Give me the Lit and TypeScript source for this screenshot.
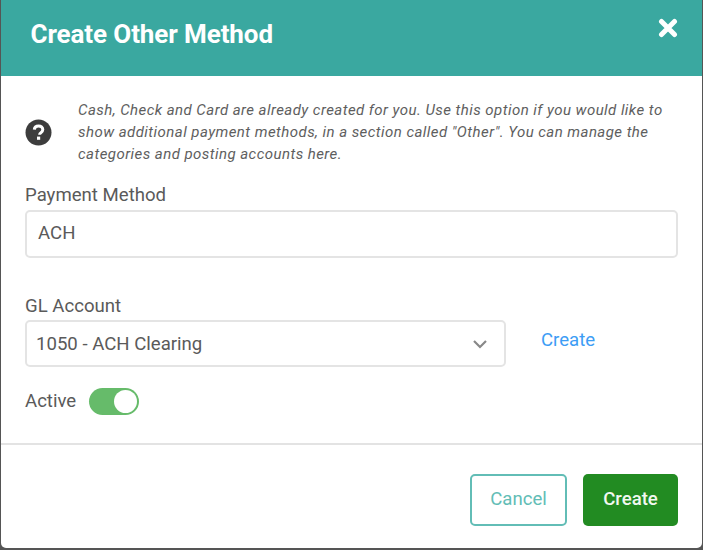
import { LitElement, html, css } from "lit";
import { customElement } from "lit/decorators.js";

@customElement("app-root")
export class AppRoot extends LitElement {
  static styles = css`
    :host { display: block; width: 703px; height: 550px; background: #555; font-family: Roboto, "Liberation Sans", sans-serif; overflow: hidden; }
    .modal { box-sizing: border-box; width: 701px; height: 548px; margin-left: 1px; background: #fff; border-radius: 0 0 5px 5px; display: flex; flex-direction: column; overflow: hidden; }
    .head { height: 76px; flex: none; background: #3aa8a0; display: flex; align-items: flex-start; justify-content: space-between; box-sizing: border-box; padding: 17px 24px 0 29.500px; }
    .title { color: #fff; font-size: 26px; font-weight: 700; line-height: 34px; letter-spacing: -0.1px; }
    .close { width: 20px; height: 20px; margin-top: 1px; display: block; }
    .body { flex: none; box-sizing: border-box; height: 369px; padding: 22px 24px 0 24px; border-bottom: 2px solid #e3e3e3; }
    .info { display: flex; align-items: center; height: 68px; }
    .info svg { width: 27px; height: 27px; flex: none; margin-right: 26px; }
    .info p { margin: 0; font-size: 15px; line-height: 22px; font-style: italic; color: #5e5e5e; width: 600px; letter-spacing: 0.45px; }
    .lab { display: block; color: #5a5a5a; font-size: 18.6px; line-height: 24px; }
    .lab.pm { margin-top: 17px; height: 27px; }
    .field { box-sizing: border-box; border: 2px solid #e4e4e4; border-radius: 5px; height: 48px; width: 653px; display: flex; align-items: center; padding: 0 9px; color: #5a5a5a; font-size: 18.6px; }
    .field.plain { padding: 0 11px 2px; }
    .lab.gl { margin-top: 36px; height: 26px; }
    .row { display: flex; align-items: flex-start; }
    .sel { width: 481px; height: 47px; justify-content: space-between; padding-right: 15px; }
    .sel svg { width: 18px; height: 12px; }
    .link { color: #3d9df5; font-size: 18.6px; margin-left: 35px; margin-top: 8px; line-height: 24px; }
    .active { display: flex; align-items: center; gap: 13px; margin-top: 20px; color: #5a5a5a; font-size: 18.6px; height: 28px; }
    .toggle { width: 50px; height: 27px; border-radius: 14px; background: #66bb6a; position: relative; }
    .knob { position: absolute; right: 2px; top: 2px; width: 23px; height: 23px; border-radius: 50%; background: #fff; }
    .foot { display: flex; justify-content: flex-end; gap: 16px; padding: 29px 24px 0 0; }
    .btn { box-sizing: border-box; height: 52px; padding-bottom: 2px; border-radius: 5px; display: flex; align-items: center; justify-content: center; font-size: 18.6px; font-weight: 500; }
    .cancel { width: 97px; border: 2px solid #62bdb6; color: #62bdb6; font-weight: 400; }
    .create { width: 95px; background: #228b22; color: #f1f8f1; }
  `;

  render() {
    return html`<div class="modal">
      <div class="head">
        <div class="title">Create Other Method</div>
        <svg class="close" viewBox="0 0 20 20"><path d="M3.5 3.5 16.5 16.5M16.5 3.5 3.5 16.5" stroke="#fff" stroke-width="5" stroke-linecap="round"/></svg>
      </div>
      <div class="body">
        <div class="info">
          <svg viewBox="0 0 27 27"><circle cx="13.5" cy="13.5" r="13" fill="#3d3d3d"/><path d="M9.3 10.6c.2-2.400 2-3.600 4.300-3.600 2.400 0 4.200 1.400 4.200 3.600 0 2.900-3.200 3-3.200 5.100" fill="none" stroke="#fff" stroke-width="3"/><rect x="12" y="17.600" width="3.200" height="3.200" fill="#fff"/></svg>
          <p>Cash, Check and Card are already created for you. Use this option if you would like to show additional payment methods, in a section called "Other". You can manage the categories and posting accounts here.</p>
        </div>
        <div class="lab pm">Payment Method</div>
        <div class="field plain">ACH</div>
        <div class="lab gl">GL Account</div>
        <div class="row">
          <div class="field sel">1050 - ACH Clearing
            <svg viewBox="0 0 18 12"><path d="M3 3 9 9 15 3" fill="none" stroke="#888" stroke-width="2.200"/></svg>
          </div>
          <span class="link">Create</span>
        </div>
        <div class="active">Active <span class="toggle"><span class="knob"></span></span></div>
      </div>
      <div class="foot">
        <div class="btn cancel">Cancel</div>
        <div class="btn create">Create</div>
      </div>
    </div>`;
  }
}
